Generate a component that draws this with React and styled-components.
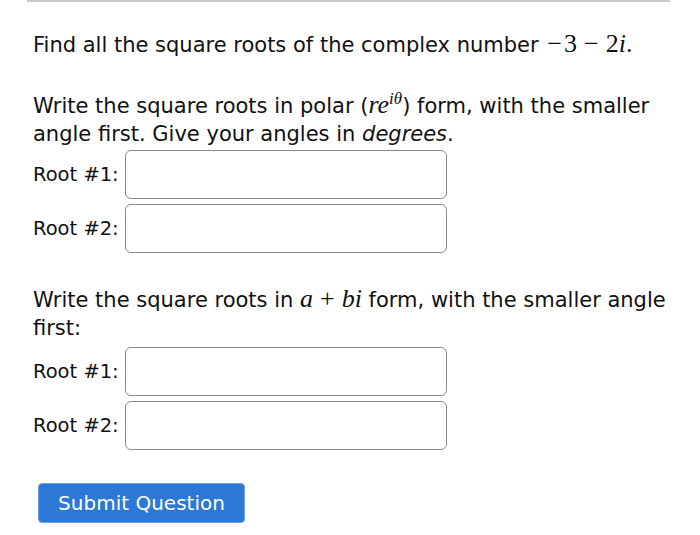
import React from 'react';
import styled, { createGlobalStyle } from 'styled-components';

const GlobalStyle = createGlobalStyle`
  body {
    margin: 0;
    background: #fff;
    font-family: "DejaVu Sans", "Liberation Sans", sans-serif;
    color: #111;
  }
`;

const Question = () => {
    return (
        <Wrap>
            <GlobalStyle />
            <Para top={31}>
                Find all the square roots of the complex number <M><Op>−</Op>3<Op gap>−</Op>2<I>i</I>.</M>
            </Para>
            <Para top={35}>
                Write the square roots in polar (<M><I>re</I><Sup><I>iθ</I></Sup></M>) form, with the smaller<br />
                angle first. Give your angles in <em>degrees</em>.
            </Para>
            <Row top={2}>
                <Label>Root #1:</Label>
                <Field />
            </Row>
            <Row top={5}>
                <Label>Root #2:</Label>
                <Field />
            </Row>
            <Para top={35}>
                Write the square roots in <M><I>a</I><Op gap>+</Op><I>bi</I></M> form, with the smaller angle<br />
                first:
            </Para>
            <Row top={5}>
                <Label>Root #1:</Label>
                <Field />
            </Row>
            <Row top={5}>
                <Label>Root #2:</Label>
                <Field />
            </Row>
            <Submit>Submit Question</Submit>
        </Wrap>
    );
};

export default Question;

const Wrap = styled.div`
  margin-left: 27px;
  width: 643px;
  padding-left: 6px;
  border-top: 2px solid #c8c8c8;
  box-sizing: border-box;
  padding-bottom: 20px;
`;

const Para = styled.p`
  margin: ${props => props.top - 2}px 0 0 0;
  font-size: 21px;
  line-height: 28px;
  white-space: nowrap;
`;

const M = styled.span`
  font-family: "Liberation Serif", "DejaVu Serif", serif;
  font-size: 26px;
  line-height: 1;
  white-space: nowrap;
`;

const Op = styled.span`
  margin: 0 ${props => props.gap ? '7px' : '2px'};
`;

const I = styled.i`
  font-style: italic;
`;

const Sup = styled.sup`
  font-size: 17px;
  vertical-align: 9px;
  line-height: 0;
`;

const Row = styled.div`
  display: flex;
  align-items: center;
  gap: 7px;
  margin-top: ${props => props.top}px;
`;

const Label = styled.span`
  font-size: 19.5px;
  line-height: 28px;
  width: 85px;
  white-space: nowrap;
`;

const Field = styled.input`
  width: 322px;
  height: 49px;
  box-sizing: border-box;
  border: 1.5px solid #8a8a8a;
  border-radius: 6px;
  background: #fff;
  outline: none;
`;

const Submit = styled.button`
  display: block;
  margin: 33px 0 0 5px;
  width: 207px;
  height: 40px;
  background: #2b78d6;
  color: #fff;
  border: 1px solid #6fa3e0;
  border-radius: 4px;
  font-family: "DejaVu Sans", "Liberation Sans", sans-serif;
  font-size: 20px;
  padding: 0;
`;
